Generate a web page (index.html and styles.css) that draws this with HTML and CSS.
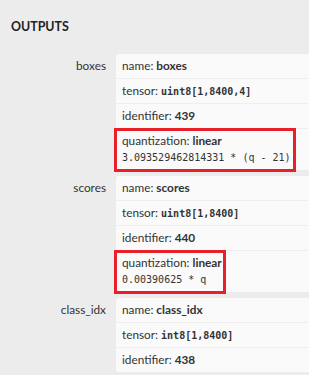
FILE: index.html
```html
<!DOCTYPE html>
<html lang="en">
<head>
    <meta charset="UTF-8">
    <meta name="viewport" content="width=device-width, initial-scale=1.0">
    <title>Outputs</title>
    <link rel="stylesheet" href="styles.css">
</head>
<body>
    <div class="sidebar">
        <div class="sidebar-header">Outputs</div>

        <!-- boxes -->
        <div class="sidebar-item">
            <div class="sidebar-item-name">boxes</div>
            <div class="sidebar-item-value">
                <div class="value-line">name: <b>boxes</b></div>
                <div class="value-line">tensor: <code><b>uint8[1,8400,4]</b></code></div>
                <div class="value-line">identifier: <b>439</b></div>
                <div class="value-line quant">
                    <div>quantization: <b>linear</b></div>
                    <code class="expr">3.093529462814331 * (q - 21)</code>
                    <span class="mark mark-wide"></span>
                </div>
            </div>
        </div>

        <!-- scores -->
        <div class="sidebar-item">
            <div class="sidebar-item-name">scores</div>
            <div class="sidebar-item-value">
                <div class="value-line">name: <b>scores</b></div>
                <div class="value-line">tensor: <code><b>uint8[1,8400]</b></code></div>
                <div class="value-line">identifier: <b>440</b></div>
                <div class="value-line quant">
                    <div>quantization: <b>linear</b></div>
                    <code class="expr">0.00390625 * q</code>
                    <span class="mark mark-narrow"></span>
                </div>
            </div>
        </div>

        <!-- class_idx -->
        <div class="sidebar-item">
            <div class="sidebar-item-name">class_idx</div>
            <div class="sidebar-item-value">
                <div class="value-line">name: <b>class_idx</b></div>
                <div class="value-line">tensor: <code><b>int8[1,8400]</b></code></div>
                <div class="value-line">identifier: <b>438</b></div>
            </div>
        </div>
    </div>
</body>
</html>
```

FILE: styles.css
```css
/* General reset */
* {
    margin: 0;
    padding: 0;
    box-sizing: border-box;
}

body {
    font-family: Lato, "Open Sans", Arial, sans-serif;
    font-size: 11.8px;
    color: #333;
    background-color: #ececec;
    overflow: hidden;
}

.sidebar {
    padding: 0 0 0 11px;
    margin-right: -6px;
}

.sidebar-header {
    font-weight: bold;
    font-size: 12.4px;
    text-transform: uppercase;
    line-height: 16px;
    padding-top: 19px;
    margin-bottom: 19px;
    color: #222;
}

/* One output row: label on the left, value list on the right */
.sidebar-item {
    display: flex;
    margin-bottom: 6px;
}

.sidebar-item-name {
    width: 105px;
    flex: none;
    text-align: right;
    padding-right: 10px;
    padding-top: 4px;
    line-height: 16px;
}

.sidebar-item-value {
    flex: 1;
    background-color: #fafafa;
    border-radius: 3px;
}

.value-line {
    position: relative;
    padding: 4px 6px;
    line-height: 16px;
    height: 25px;
    border-top: 1px solid #efefef;
}

.value-line:first-child {
    border-top: none;
    height: 24px;
}

.value-line.quant {
    height: 42px;
}

.value-line b {
    font-weight: bold;
}

code {
    font-family: "DejaVu Sans Mono", "Liberation Mono", monospace;
    font-size: 10px;
    line-height: 1;
}

code.expr {
    display: block;
    line-height: 17px;
}

/* Red annotation boxes drawn over the quantization lines */
.mark {
    position: absolute;
    top: -1px;
    left: -2px;
    bottom: -2px;
    border: 3px solid #e8202a;
}

.mark-wide {
    width: 182px;
}

.mark-narrow {
    width: 112px;
}
```
